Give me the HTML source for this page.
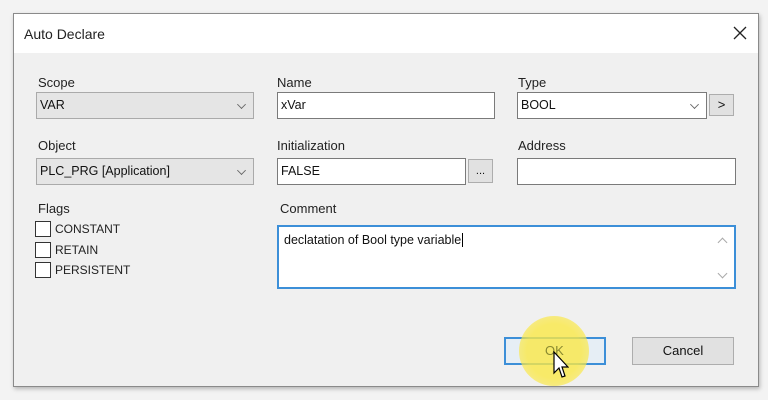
<!DOCTYPE html>
<html><head><style>
body{margin:0;width:768px;height:400px;background:#f3f3f3;position:relative;overflow:hidden;font-family:"Liberation Sans",sans-serif;font-size:13px;color:#111}
.a{position:absolute}
.dlg{left:13px;top:13px;width:744px;height:372px;background:#f0f0f0;border:1px solid #8a8a8a;box-shadow:1px 2px 4px rgba(0,0,0,.25)}
.tb{left:0;top:0;width:744px;height:39px;background:#fff}
.box{position:absolute;box-sizing:border-box;border:1px solid #7a7a7a;background:#fff;padding:0 3px;line-height:24px;font-size:12.5px}
.lbl{position:absolute;font-size:13px;color:#222}
.chev{position:absolute;right:8px;top:8px;width:6px;height:6px;border-right:1px solid #666;border-bottom:1px solid #666;transform:rotate(45deg) scale(.9)}
.cb{position:absolute;width:14px;height:14px;border:1px solid #333;background:#fff}
.btn{position:absolute;box-sizing:border-box;border:1px solid #adadad;background:#e1e1e1;text-align:center;font-size:13px}
</style></head><body>
<div class="a dlg">
 <div class="a tb"></div>
 <div class="lbl" style="left:10px;top:12px;font-size:14px">Auto Declare</div>
 <svg class="a" style="left:719px;top:12px" width="14" height="14" viewBox="0 0 14 14"><path d="M1 1 L13 13 M13 1 L1 13" stroke="#222" stroke-width="1.3"/></svg>
</div>
<div class="lbl" style="left:38px;top:75px">Scope</div>
<div class="box" style="left:36px;top:92px;width:218px;height:27px;background:#e5e5e5;border-color:#aaa">VAR<span class="chev"></span></div>
<div class="lbl" style="left:277px;top:75px">Name</div>
<div class="box" style="left:277px;top:92px;width:218px;height:27px">xVar</div>
<div class="lbl" style="left:518px;top:75px">Type</div>
<div class="box" style="left:517px;top:92px;width:190px;height:27px">BOOL<span class="chev"></span></div>
<div class="btn" style="left:709px;top:94px;width:25px;height:22px;line-height:20px">&gt;</div>
<div class="lbl" style="left:38px;top:138px">Object</div>
<div class="box" style="left:36px;top:158px;width:218px;height:27px;background:#e5e5e5;border-color:#aaa">PLC_PRG [Application]<span class="chev"></span></div>
<div class="lbl" style="left:277px;top:138px">Initialization</div>
<div class="box" style="left:277px;top:158px;width:189px;height:27px">FALSE</div>
<div class="btn" style="left:468px;top:159px;width:25px;height:24px;line-height:22px;font-size:11px">...</div>
<div class="lbl" style="left:518px;top:138px">Address</div>
<div class="box" style="left:517px;top:158px;width:219px;height:27px"></div>
<div class="lbl" style="left:38px;top:201px">Flags</div>
<div class="cb" style="left:35px;top:221px"></div><div class="lbl" style="left:55px;top:222px;font-size:12px">CONSTANT</div>
<div class="cb" style="left:35px;top:242px"></div><div class="lbl" style="left:55px;top:243px;font-size:12px">RETAIN</div>
<div class="cb" style="left:35px;top:262px"></div><div class="lbl" style="left:55px;top:263px;font-size:12px">PERSISTENT</div>
<div class="lbl" style="left:280px;top:201px">Comment</div>
<div class="box" style="left:277px;top:225px;width:459px;height:64px;border:2px solid #3c8fd8;line-height:26px;padding-left:5px">declatation of Bool type variable<span style="border-left:1px solid #000;margin-left:1px"></span>
 <span class="a" style="right:8px;top:12px;width:6px;height:6px;border-left:1px solid #aaa;border-top:1px solid #aaa;transform:rotate(45deg)"></span>
 <span class="a" style="right:8px;bottom:10px;width:6px;height:6px;border-right:1px solid #aaa;border-bottom:1px solid #aaa;transform:rotate(45deg)"></span>
</div>
<div class="btn" style="left:504px;top:337px;width:102px;height:28px;border:2px solid #3c8fd8;background:#e6eef5"></div>
<div class="a" style="left:519px;top:316px;width:70px;height:70px;border-radius:50%;background:radial-gradient(circle,rgba(250,232,70,.8) 55%,rgba(250,232,70,.4) 100%)"></div>
<div class="lbl" style="left:545px;top:343px;color:#8a8a30">OK</div>
<svg class="a" style="left:553px;top:351px" width="16" height="30" viewBox="0 0 16 30"><path d="M1 1 L1 22 L6 17 L9 26 L12 25 L9 16 L15 16 Z" fill="#fff" stroke="#000" stroke-width="1.2"/></svg>
<div class="btn" style="left:632px;top:337px;width:102px;height:28px;line-height:26px">Cancel</div>
</body></html>
